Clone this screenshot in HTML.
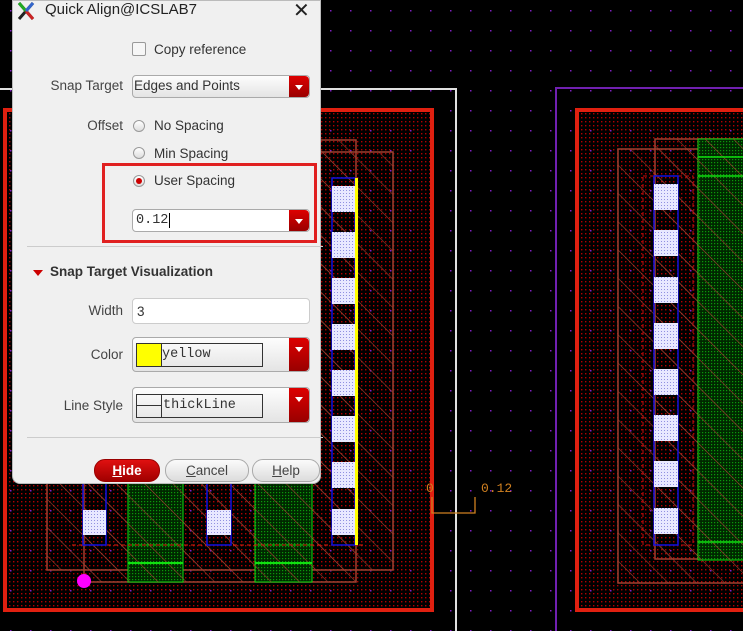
<!DOCTYPE html>
<html><head><meta charset="utf-8"><style>
body{margin:0;width:743px;height:631px;overflow:hidden;background:#000;position:relative;font-family:"Liberation Sans","DejaVu Sans",sans-serif;}
svg{position:absolute;left:0;top:0}
.dlg{position:absolute;left:12px;top:0;width:309px;height:484px;background:#f0f0f0;border-radius:0 0 8px 8px;border:1px solid #bbb;box-sizing:border-box;font-size:13.5px;color:#333}
.a{position:absolute}
.lbl{position:absolute;text-align:right;color:#444}
.combo{position:absolute;height:23px;border:1px solid #aaa;border-radius:4px;background:linear-gradient(#fdfdfd,#e4e4e4);box-sizing:border-box}
.dd{position:absolute;right:0;top:0;width:20px;height:100%;background:linear-gradient(#d00,#900);border-radius:0 4px 4px 0}
.dd:after{content:"";position:absolute;left:6px;top:9px;border-left:4px solid transparent;border-right:4px solid transparent;border-top:5px solid #fff}
.radio{position:absolute;width:12px;height:12px;border-radius:50%;border:1px solid #999;background:linear-gradient(#fff,#ddd);box-sizing:border-box}
.btn{position:absolute;top:458px;height:23px;border-radius:11px;border:1px solid #aaa;box-sizing:border-box;text-align:center;line-height:21px;background:linear-gradient(#fbfbfb,#dcdcdc);color:#444}
.mono{font-family:"Liberation Mono",monospace}
</style></head><body>
<svg width="743" height="631">
<defs>
<pattern id="rd" width="4" height="4" patternUnits="userSpaceOnUse"><rect x="1" y="1" width="1.4" height="1.4" fill="#b00000"/></pattern>
<pattern id="pd" width="20" height="20" patternUnits="userSpaceOnUse"><rect x="10" y="10" width="1.5" height="1.5" fill="#8020c0"/></pattern>
<pattern id="ht" width="20" height="20" patternUnits="userSpaceOnUse" patternTransform="rotate(-45)"><line x1="0" y1="0" x2="0" y2="20" stroke="#a04030" stroke-width="1.2"/></pattern>
<pattern id="gd" width="3" height="3" patternUnits="userSpaceOnUse"><rect width="3" height="3" fill="#002800"/><rect x="0" y="0" width="1.2" height="1.2" fill="#0a9a0a"/></pattern>
<pattern id="wd" width="3" height="3" patternUnits="userSpaceOnUse"><rect width="3" height="3" fill="#e8e8ff"/><rect x="1" y="1" width="1" height="1" fill="#9090e0"/></pattern>
</defs>
<rect width="743" height="631" fill="url(#pd)"/>
<path d="M0 89H456V631" fill="none" stroke="#e0e0e0" stroke-width="2"/>
<rect x="556" y="88" width="200" height="560" fill="none" stroke="#7020b0" stroke-width="2"/>
<!-- left -->
<rect x="5" y="110" width="427" height="500" fill="#000"/>
<rect x="5" y="110" width="427" height="500" fill="url(#rd)"/>
<rect x="5" y="110" width="427" height="500" fill="url(#pd)"/>
<rect x="5" y="110" width="427" height="500" fill="none" stroke="#e02010" stroke-width="4"/>
<rect x="47" y="152" width="346" height="418" fill="url(#ht)" stroke="#a04030" stroke-width="1.5"/>
<rect x="84" y="140" width="272" height="442" fill="url(#ht)" stroke="#a04030" stroke-width="1.5"/>
<rect x="128" y="176" width="55" height="406" fill="url(#gd)" stroke="#10e010" stroke-width="1"/>
<rect x="255" y="176" width="57" height="406" fill="url(#gd)" stroke="#10e010" stroke-width="1"/>
<rect x="128" y="176" width="55" height="406" fill="url(#ht)"/>
<rect x="255" y="176" width="57" height="406" fill="url(#ht)"/>
<line x1="128" y1="563" x2="183" y2="563" stroke="#10e010" stroke-width="2"/>
<line x1="255" y1="563" x2="312" y2="563" stroke="#10e010" stroke-width="2"/>
<line x1="128" y1="545" x2="183" y2="545" stroke="#10e010" stroke-width="1"/>
<line x1="255" y1="545" x2="312" y2="545" stroke="#10e010" stroke-width="1"/>
<line x1="72" y1="545" x2="366" y2="545" stroke="#e02010" stroke-dasharray="4 3"/>
<text x="426" y="492" fill="#d08020" font-family="Liberation Mono" font-size="13">0</text>
<text x="481" y="492" fill="#d08020" font-family="Liberation Mono" font-size="13">0.12</text>
<path d="M432 497V513H475V497" fill="none" stroke="#d08020" stroke-width="1.3"/>
<!-- right -->
<rect x="577" y="110" width="180" height="500" fill="#000"/>
<rect x="577" y="110" width="180" height="500" fill="url(#rd)"/>
<rect x="577" y="110" width="180" height="500" fill="url(#pd)"/>
<rect x="577" y="110" width="180" height="500" fill="none" stroke="#e02010" stroke-width="4"/>
<rect x="618" y="149" width="140" height="434" fill="url(#ht)" stroke="#a04030" stroke-width="1.5"/>
<rect x="655" y="139" width="100" height="420" fill="url(#ht)" stroke="#a04030" stroke-width="1.5"/>
<rect x="698" y="139" width="60" height="421" fill="url(#gd)" stroke="#10e010"/>
<rect x="698" y="139" width="60" height="421" fill="url(#ht)"/>
<line x1="698" y1="157" x2="743" y2="157" stroke="#10e010" stroke-width="1.5"/>
<line x1="698" y1="176" x2="743" y2="176" stroke="#10e010" stroke-width="1.5"/>
<line x1="698" y1="542" x2="743" y2="542" stroke="#10e010" stroke-width="1.5"/>
<rect x="643" y="176" width="50" height="369" fill="none" stroke="#c01010" stroke-dasharray="4 3"/>
<g fill="none" stroke="#1010e0" stroke-width="1.5">
<rect x="83" y="178" width="23" height="367"/><rect x="207" y="178" width="24" height="367"/><rect x="332" y="178" width="23" height="367"/>
<rect x="654" y="176" width="24" height="369"/></g>
<g fill="url(#wd)">
<rect x="83" y="510" width="23" height="25"/><rect x="207" y="510" width="24" height="25"/>
<rect x="332" y="186" width="23" height="26"/><rect x="332" y="232" width="23" height="26"/><rect x="332" y="278" width="23" height="26"/><rect x="332" y="324" width="23" height="26"/><rect x="332" y="370" width="23" height="26"/><rect x="332" y="416" width="23" height="26"/><rect x="332" y="462" width="23" height="26"/><rect x="332" y="509" width="23" height="26"/>
<rect x="654" y="184" width="24" height="26"/><rect x="654" y="230" width="24" height="26"/><rect x="654" y="277" width="24" height="26"/><rect x="654" y="323" width="24" height="26"/><rect x="654" y="369" width="24" height="26"/><rect x="654" y="415" width="24" height="26"/><rect x="654" y="461" width="24" height="26"/><rect x="654" y="508" width="24" height="26"/>
</g>
<rect x="355" y="178" width="3" height="367" fill="#ffff00"/>
<circle cx="84" cy="581" r="7" fill="#ff00ff"/>
</svg>

<div class="dlg">
<svg class="a" style="left:4px;top:1px" width="20" height="18"><path d="M2 1L16 17M16 1L2 17" stroke="#222" stroke-width="3"/><path d="M2 1L9 9" stroke="#2a2" stroke-width="3"/><path d="M9 9L16 17" stroke="#c22" stroke-width="3"/><path d="M16 1L9 9" stroke="#36c" stroke-width="3"/></svg>
<div class="a" style="left:32px;top:0;font-size:15px;color:#222">Quick Align@ICSLAB7</div>
<div class="a" style="left:280px;top:-3px;font-size:20px;color:#222">✕</div>
<div class="a" style="left:119px;top:41px;width:14px;height:14px;border:1px solid #999;border-radius:2px;background:#f6f6f6;box-sizing:border-box"></div>
<div class="a" style="left:141px;top:41px">Copy reference</div>
<div class="lbl" style="left:0;width:110px;top:77px">Snap Target</div>
<div class="combo" style="left:119px;top:74px;width:178px"><span class="a" style="left:1px;top:2px">Edges and Points</span><div class="dd"></div></div>
<div class="lbl" style="left:0;width:110px;top:117px">Offset</div>
<div class="radio" style="left:120px;top:119px"></div><div class="a" style="left:141px;top:117px">No Spacing</div>
<div class="radio" style="left:120px;top:146px"></div><div class="a" style="left:141px;top:145px">Min Spacing</div>
<div class="radio" style="left:120px;top:174px"><div class="a" style="left:2px;top:2px;width:6px;height:6px;border-radius:50%;background:#c00"></div></div><div class="a" style="left:141px;top:172px">User Spacing</div>
<div class="combo" style="left:119px;top:208px;width:178px;background:#fff"><span class="a mono" style="left:3px;top:3px">0.12</span><div class="a" style="left:36px;top:3px;width:1px;height:15px;background:#000"></div><div class="dd"></div></div>
<div class="a" style="left:89px;top:162px;width:215px;height:80px;border:3px solid #e02020;box-sizing:border-box"></div>
<div class="a" style="left:14px;top:245px;width:296px;height:1px;background:#ccc"></div>
<div class="a" style="left:20px;top:269px;border-left:5px solid transparent;border-right:5px solid transparent;border-top:6px solid #c00"></div>
<div class="a" style="left:37px;top:263px;font-weight:bold;color:#333">Snap Target Visualization</div>
<div class="lbl" style="left:0;width:110px;top:302px">Width</div>
<div class="combo" style="left:119px;top:297px;width:178px;height:26px;background:#fff;border-color:#ccc"><span class="a" style="left:4px;top:5px">3</span></div>
<div class="lbl" style="left:0;width:110px;top:346px">Color</div>
<div class="combo" style="left:119px;top:336px;width:178px;height:35px"><div class="a" style="left:3px;top:5px;width:127px;height:24px;border:1px solid #333;box-sizing:border-box"></div><div class="a" style="left:4px;top:6px;width:24px;height:22px;background:#ff0;border-right:1px solid #333"></div><span class="a mono" style="left:29px;top:9px">yellow</span><div class="dd"></div></div>
<div class="lbl" style="left:0;width:110px;top:397px">Line Style</div>
<div class="combo" style="left:119px;top:386px;width:178px;height:36px"><div class="a" style="left:3px;top:6px;width:127px;height:24px;border:1px solid #333;box-sizing:border-box"></div><div class="a" style="left:28px;top:6px;width:1px;height:24px;background:#333"></div><div class="a" style="left:3px;top:17px;width:25px;height:1px;background:#333"></div><span class="a mono" style="left:30px;top:10px">thickLine</span><div class="dd"></div></div>
<div class="a" style="left:14px;top:436px;width:296px;height:1px;background:#ccc"></div>
<div class="btn" style="left:81px;width:66px;background:linear-gradient(#e01010,#a00000);border-color:#900;color:#fff;font-weight:bold"><u>H</u>ide</div>
<div class="btn" style="left:152px;width:84px"><u>C</u>ancel</div>
<div class="btn" style="left:239px;width:68px"><u>H</u>elp</div>
</div>
</body></html>
